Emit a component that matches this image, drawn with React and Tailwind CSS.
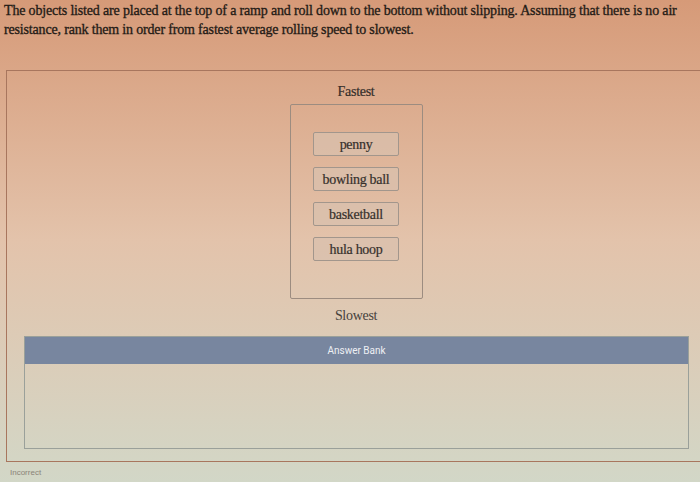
const items = ['penny', 'bowling ball', 'basketball', 'hula hoop']

const serif = { fontFamily: '"Liberation Serif", "Times New Roman", serif' }

export default function App() {
  return (
    <div
      className="w-[700px] h-[482px] overflow-hidden bg-linear-to-b from-[#d69a78] via-[#e3c3ab] to-[#d2d7c7] text-[#2c2622] relative"
      style={serif}
    >
      {/* prompt */}
      <p className="px-[4px] pt-[1px] text-[14px] leading-[19px] tracking-[-0.17px] text-[#231a15] w-[700px]" style={{ WebkitTextStroke: '0.3px #231a15' }}>
        The objects listed are placed at the top of a ramp and roll down to the bottom without slipping. Assuming that there is no air resistance, rank them in order from fastest average rolling speed to slowest.
      </p>

      {/* question box */}
      <div className="absolute left-[6px] top-[70px] w-[700px] h-[392px] border border-[#a8765e] flex flex-col">
        <div className="flex flex-col items-center">
          <div className="mt-[13px] text-[14px] leading-[16px] text-[#342e2a] tracking-[-0.3px]" style={{ WebkitTextStroke: '0.2px #342e2a' }}>Fastest</div>
          <div className="mt-[4px] w-[133px] h-[195px] border border-[#9c8c80] rounded-[2px] flex flex-col items-center pt-[27px] gap-[11px]">
            {items.map((t) => (
              <div
                key={t}
                className="w-[86px] h-[24px] border border-[#a2968c] rounded-[2px] bg-[#d8c0ae]/70 flex items-center justify-center text-[14px] text-[#36302c] tracking-[-0.3px]"
                style={{ WebkitTextStroke: '0.2px #36302c' }}
              >
                {t}
              </div>
            ))}
          </div>
          <div className="mt-[9px] text-[14px] leading-[16px] text-[#46413c] tracking-[-0.3px]">Slowest</div>
        </div>

        {/* answer bank */}
        <div className="mt-[12px] ml-[17px] w-[665px] h-[113px] border border-[#9aa09a] flex flex-col">
          <div
            className="h-[27px] bg-[#78869f] flex items-center justify-center text-[10px] text-[#eef0f4]"
            style={{ fontFamily: 'Roboto, "Liberation Sans", sans-serif' }}
          >
            Answer Bank
          </div>
          <div className="flex-1" />
        </div>
      </div>

      <div
        className="absolute left-[10px] top-[467px] text-[8px] text-[#8a8478]"
        style={{ fontFamily: '"Liberation Sans", Arial, sans-serif' }}
      >
        Incorrect
      </div>
    </div>
  )
}
